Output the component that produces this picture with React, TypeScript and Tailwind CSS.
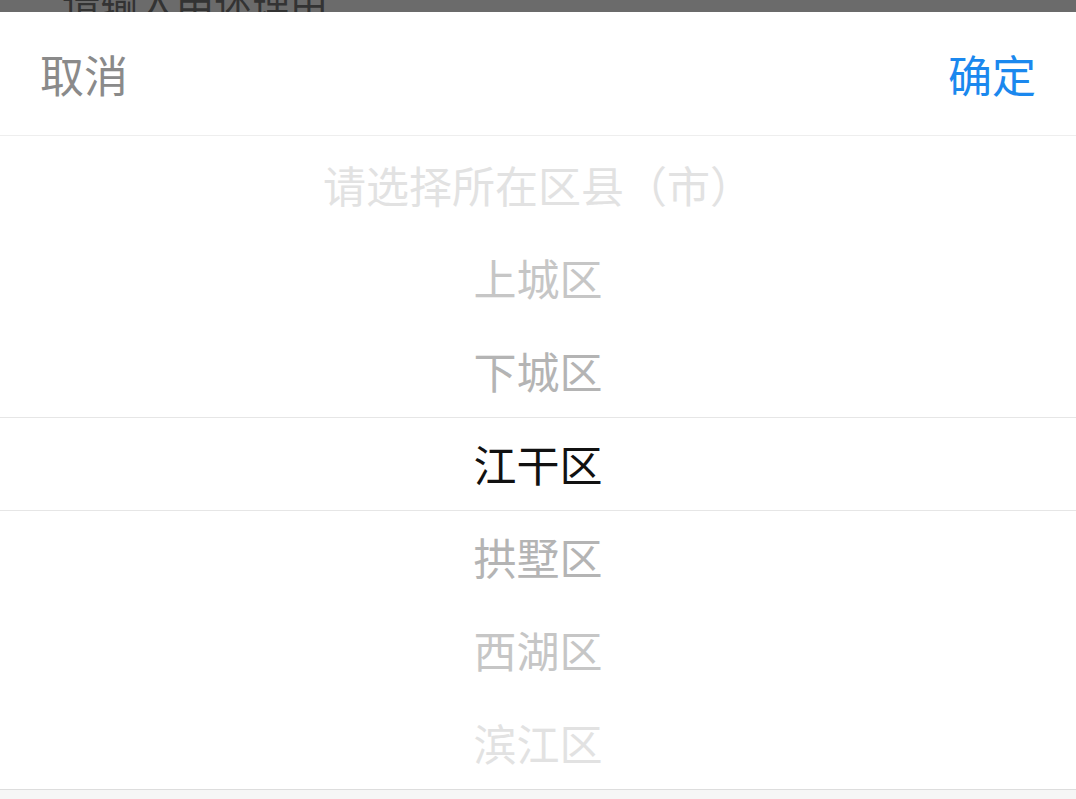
const rows = [
  { label: "请选择所在区县（市）", color: "text-[#e2e2e2]" },
  { label: "上城区", color: "text-[#c6c6c6]" },
  { label: "下城区", color: "text-[#b4b4b4]" },
  { label: "江干区", color: "text-[#111111]" },
  { label: "拱墅区", color: "text-[#b4b4b4]" },
  { label: "西湖区", color: "text-[#c6c6c6]" },
  { label: "滨江区", color: "text-[#e2e2e2]" },
];

export default function App() {
  return (
    <div
      className="w-[1076px] h-[799px] overflow-hidden bg-white"
      style={{ fontFamily: '"Noto Sans CJK SC", "Noto Sans", sans-serif' }}
    >
      {/* dimmed page behind the sheet */}
      <div className="h-[12px] overflow-hidden bg-[#6b6b6b]">
        <div className="pl-[62px] -mt-[20px] text-[38px] leading-[44px] text-[#333333]">
          请输入申述理由
        </div>
      </div>

      <div className="flex h-[124px] items-center justify-between border-b border-[#eeeeee] px-10 text-[44px]">
        <span className="text-[#8a8a8a]">取消</span>
        <span className="text-[#1b88ee]">确定</span>
      </div>

      <div className="relative pt-[2px]">
        <div className="absolute left-0 right-0 top-[281px] h-[94px] border-y border-[#e6e6e6]" />
        {rows.map((r) => (
          <div
            key={r.label}
            className={`flex h-[93px] items-center justify-center text-[43px] ${r.color}`}
          >
            {r.label}
          </div>
        ))}
      </div>

      <div className="h-[12px] border-t border-[#dddddd] bg-[#f6f6f6]" />
    </div>
  );
}
